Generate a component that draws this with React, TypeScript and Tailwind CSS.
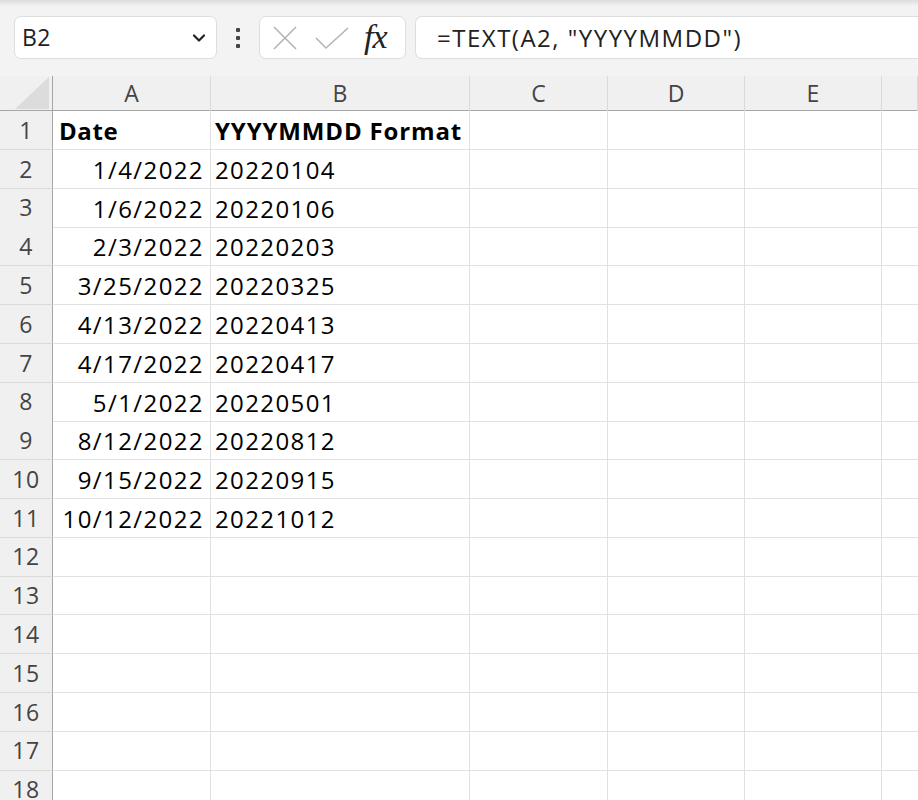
import React from 'react';

const font = { fontFamily: '"Open Sans", "Noto Sans", sans-serif' };

const rows: [string, string][] = [
  ['1/4/2022', '20220104'],
  ['1/6/2022', '20220106'],
  ['2/3/2022', '20220203'],
  ['3/25/2022', '20220325'],
  ['4/13/2022', '20220413'],
  ['4/17/2022', '20220417'],
  ['5/1/2022', '20220501'],
  ['8/12/2022', '20220812'],
  ['9/15/2022', '20220915'],
  ['10/12/2022', '20221012'],
];

const cols = ['A', 'B', 'C', 'D', 'E', ''];
const gridCols = 'grid grid-cols-[53px_158px_259px_138px_137px_137px_1fr]';

const Toolbar: React.FC = () => (
  <div className="relative h-[76px] bg-[#f3f3f3] flex items-start pt-[16px] pl-[14px]">
    <div className="absolute top-0 left-0 right-0 h-[6px] bg-gradient-to-b from-[#dcdcdc] to-[#f3f3f3]" />
    <div className="relative w-[203px] h-[43px] bg-white border border-[#dedede] rounded-[7px] flex items-center justify-between pl-[7px] pr-[10px]">
      <span className="text-[23px] tracking-[0.5px] text-[#222]">B2</span>
      <svg width="14" height="10" viewBox="0 0 14 10">
        <path d="M2 2.5 L7 7.5 L12 2.5" fill="none" stroke="#222" strokeWidth="2.2" strokeLinecap="round" strokeLinejoin="round" />
      </svg>
    </div>
    <div className="relative w-[42px] h-[43px] flex flex-col items-center justify-center gap-[4px]">
      <span className="w-[4px] h-[4px] bg-[#444] rounded-[1px]" />
      <span className="w-[4px] h-[4px] bg-[#444] rounded-[1px]" />
      <span className="w-[4px] h-[4px] bg-[#444] rounded-[1px]" />
    </div>
    <div className="relative w-[147px] h-[43px] bg-white border border-[#dedede] rounded-[7px] flex items-center pl-[12px]">
      <svg width="26" height="26" viewBox="0 0 26 26">
        <path d="M2 2 L24 24 M24 2 L2 24" stroke="#b4b4b4" strokeWidth="1.6" />
      </svg>
      <svg width="36" height="26" viewBox="0 0 36 26" className="ml-[16px]">
        <path d="M2 13 L12 23 L34 3" fill="none" stroke="#b4b4b4" strokeWidth="1.6" />
      </svg>
      <span className="ml-[14px] mt-[-2px] text-[34px] italic text-[#222] leading-none tracking-[-1px]" style={{ fontFamily: '"Liberation Serif", "DejaVu Serif", serif' }}>
        fx
      </span>
    </div>
    <div className="relative ml-[9px] flex-1 h-[43px] bg-white border border-r-0 border-[#dedede] rounded-l-[7px] flex items-center pl-[21px]">
      <span className="text-[24px] tracking-[1.5px] text-[#222]">=TEXT(A2, "YYYYMMDD")</span>
    </div>
  </div>
);

const App: React.FC = () => {
  const total = 18;
  return (
    <div className="w-[918px] h-[800px] overflow-hidden bg-white" style={font}>
      <Toolbar />
      <div className={`${gridCols} h-[35px] bg-[#f0f0f0] border-b border-[#a6a6a6]`}>
        <div className="relative border-r border-[#a6a6a6]">
          <svg width="34" height="32" viewBox="0 0 34 32" className="absolute right-[3px] bottom-[2px]">
            <path d="M34 0 L34 32 L0 32 Z" fill="#dcdcdc" />
          </svg>
        </div>
        {cols.map((c, i) => (
          <div key={i} className="flex items-center justify-center border-r border-[#dadada] text-[23px] text-[#444]">
            {c}
          </div>
        ))}
      </div>
      {Array.from({ length: total }, (_, r) => {
        const n = r + 1;
        const data = n >= 2 && n <= 11 ? rows[n - 2] : null;
        return (
          <div key={n} className={`${gridCols} h-[38.8px]`}>
            <div className="flex items-center justify-center bg-[#f0f0f0] border-r border-[#a6a6a6] border-b border-b-[#dadada] text-[23px] text-[#444] tracking-[0.5px]">
              {n}
            </div>
            <div className="flex items-center justify-end pl-[6px] pr-[6px] pt-[2px] border-r border-b border-[#e1e1e1] text-[24px] tracking-[1.4px] text-black whitespace-nowrap">
              {n === 1 ? <span className="mr-auto font-bold tracking-[0.6px]">Date</span> : data ? data[0] : ''}
            </div>
            <div className="flex items-center pl-[4px] pt-[2px] border-r border-b border-[#e1e1e1] text-[24px] tracking-[1.4px] text-black whitespace-nowrap">
              {n === 1 ? <span className="font-bold tracking-[0.85px]">YYYYMMDD Format</span> : data ? data[1] : ''}
            </div>
            <div className="border-r border-b border-[#e1e1e1]" />
            <div className="border-r border-b border-[#e1e1e1]" />
            <div className="border-r border-b border-[#e1e1e1]" />
            <div className="border-b border-[#e1e1e1]" />
          </div>
        );
      })}
    </div>
  );
};

export default App;
